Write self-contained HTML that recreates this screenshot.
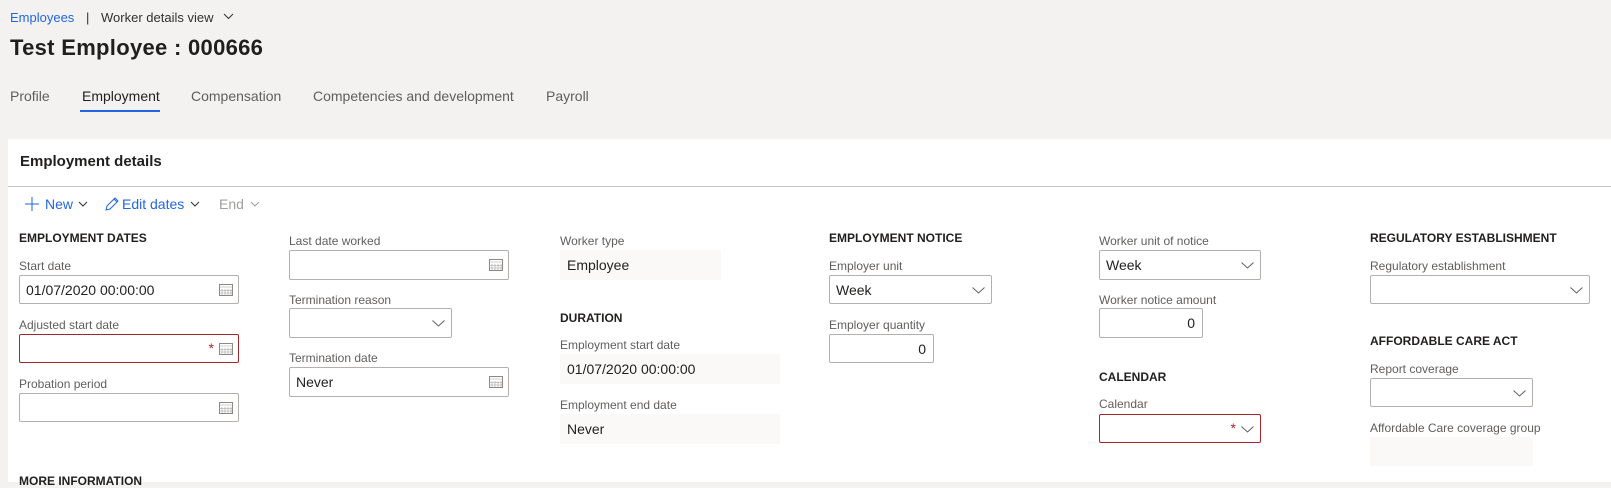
<!DOCTYPE html>
<html><head><meta charset="utf-8"><style>
*{margin:0;padding:0;box-sizing:border-box}
html{background:#f3f2f1}
body{width:1611px;height:482px;overflow:hidden;background:#f3f2f1;font-family:"Liberation Sans",sans-serif;color:#323130;position:relative}
.a{position:absolute;white-space:nowrap}
.lbl{font-size:12px;color:#605e5c;line-height:14px}
.hd{font-size:12px;font-weight:bold;color:#201f1e;line-height:14px}
.in{position:absolute;border:1px solid #b3b0ad;border-radius:2px;background:#fff;font-size:14px;color:#201f1e;padding-left:6px;display:flex;align-items:center}
.ro{position:absolute;background:#faf9f8;font-size:14px;color:#201f1e;padding-left:7px;display:flex;align-items:center}
.red{border-color:#a4262c}
.ic{position:absolute;right:5px;top:8px}
.r{justify-content:flex-end;padding-right:7px}
</style></head><body>
<div class="a" style="left:10px;top:10px;font-size:13px;color:#2266e3">Employees</div>
<div class="a" style="left:86px;top:10px;font-size:13px;color:#323130">|</div>
<div class="a" style="left:101px;top:10px;font-size:13px;color:#323130">Worker details view</div>
<svg class="a" style="left:223px;top:13px" width="11" height="7"><polyline points="1,1 5.5,5.5 10,1" fill="none" stroke="#323130" stroke-width="1"/></svg>
<div class="a" style="left:10px;top:35px;font-size:22px;font-weight:bold;color:#201f1e;letter-spacing:0.3px">Test Employee : 000666</div>
<div class="a" style="left:10px;top:88px;font-size:14px;color:#605e5c">Profile</div>
<div class="a" style="left:82px;top:88px;font-size:14px;color:#201f1e">Employment</div>
<div class="a" style="left:80px;top:110px;width:80px;height:2px;background:#2266e3"></div>
<div class="a" style="left:191px;top:88px;font-size:14px;color:#605e5c">Compensation</div>
<div class="a" style="left:313px;top:88px;font-size:14px;color:#605e5c">Competencies and development</div>
<div class="a" style="left:546px;top:88px;font-size:14px;color:#605e5c">Payroll</div>

<div class="a" style="left:8px;top:139px;width:1603px;height:343px;background:#fff"></div>
<div class="a" style="left:20px;top:153px;font-size:15px;font-weight:bold;color:#201f1e">Employment details</div>
<div class="a" style="left:8px;top:186px;width:1603px;height:1px;background:#c8c6c4"></div>

<svg class="a" style="left:25px;top:197px" width="14" height="14"><path d="M7 0V14M0 7H14" stroke="#2266e3" stroke-width="1"/></svg>
<div class="a" style="left:45px;top:196px;font-size:14px;color:#2266e3">New</div>
<svg class="a" style="left:78px;top:201px" width="10" height="6"><polyline points="1,1 5,5 9,1" fill="none" stroke="#323130"/></svg>
<svg class="a" style="left:105px;top:197px" width="14" height="14"><path d="M1 13L2 9L10 1L13 4L5 12Z M9 2L12 5" fill="none" stroke="#2266e3" stroke-width="1"/></svg>
<div class="a" style="left:122px;top:196px;font-size:14px;color:#2266e3">Edit dates</div>
<svg class="a" style="left:190px;top:201px" width="10" height="6"><polyline points="1,1 5,5 9,1" fill="none" stroke="#323130"/></svg>
<div class="a" style="left:219px;top:196px;font-size:14px;color:#a19f9d">End</div>
<svg class="a" style="left:250px;top:201px" width="10" height="6"><polyline points="1,1 5,5 9,1" fill="none" stroke="#a19f9d"/></svg>

<!-- col1 -->
<div class="a hd" style="left:19px;top:231px">EMPLOYMENT DATES</div>
<div class="a lbl" style="left:19px;top:259px">Start date</div>
<div class="in" style="left:19px;top:275px;width:220px;height:29px">01/07/2020 00:00:00<svg class="ic" width="14" height="12"><rect x="0.5" y="0.5" width="13" height="11" fill="none" stroke="#8a8886"/><path d="M0 3H14M3 5v6M6 5v6M9 5v6M12 5v6M0 6.5H14M0 9H14" stroke="#a19f9d" stroke-width="0.6"/></svg></div>
<div class="a lbl" style="left:19px;top:318px">Adjusted start date</div>
<div class="in red" style="left:19px;top:334px;width:220px;height:29px"><span style="position:absolute;right:24px;top:5px;color:#a4262c;font-size:14px">*</span><svg class="ic" width="14" height="12"><rect x="0.5" y="0.5" width="13" height="11" fill="none" stroke="#8a8886"/><path d="M0 3H14M3 5v6M6 5v6M9 5v6M12 5v6M0 6.5H14M0 9H14" stroke="#a19f9d" stroke-width="0.6"/></svg></div>
<div class="a lbl" style="left:19px;top:377px">Probation period</div>
<div class="in" style="left:19px;top:393px;width:220px;height:29px"><svg class="ic" width="14" height="12"><rect x="0.5" y="0.5" width="13" height="11" fill="none" stroke="#8a8886"/><path d="M0 3H14M3 5v6M6 5v6M9 5v6M12 5v6M0 6.5H14M0 9H14" stroke="#a19f9d" stroke-width="0.6"/></svg></div>
<div class="a hd" style="left:19px;top:474px">MORE INFORMATION</div>

<!-- col2 -->
<div class="a lbl" style="left:289px;top:234px">Last date worked</div>
<div class="in" style="left:289px;top:250px;width:220px;height:30px"><svg class="ic" width="14" height="12"><rect x="0.5" y="0.5" width="13" height="11" fill="none" stroke="#8a8886"/><path d="M0 3H14M3 5v6M6 5v6M9 5v6M12 5v6M0 6.5H14M0 9H14" stroke="#a19f9d" stroke-width="0.6"/></svg></div>
<div class="a lbl" style="left:289px;top:293px">Termination reason</div>
<div class="in" style="left:289px;top:308px;width:163px;height:30px"><svg class="ic" style="top:11px;right:6px" width="13" height="7"><polyline points="0.5,0.5 6.5,6 12.5,0.5" fill="none" stroke="#605e5c"/></svg></div>
<div class="a lbl" style="left:289px;top:351px">Termination date</div>
<div class="in" style="left:289px;top:367px;width:220px;height:30px">Never<svg class="ic" width="14" height="12"><rect x="0.5" y="0.5" width="13" height="11" fill="none" stroke="#8a8886"/><path d="M0 3H14M3 5v6M6 5v6M9 5v6M12 5v6M0 6.5H14M0 9H14" stroke="#a19f9d" stroke-width="0.6"/></svg></div>

<!-- col3 -->
<div class="a lbl" style="left:560px;top:234px">Worker type</div>
<div class="ro" style="left:560px;top:250px;width:161px;height:30px">Employee</div>
<div class="a hd" style="left:560px;top:311px">DURATION</div>
<div class="a lbl" style="left:560px;top:338px">Employment start date</div>
<div class="ro" style="left:560px;top:354px;width:220px;height:30px">01/07/2020 00:00:00</div>
<div class="a lbl" style="left:560px;top:398px">Employment end date</div>
<div class="ro" style="left:560px;top:414px;width:220px;height:30px">Never</div>

<!-- col4 -->
<div class="a hd" style="left:829px;top:231px">EMPLOYMENT NOTICE</div>
<div class="a lbl" style="left:829px;top:259px">Employer unit</div>
<div class="in" style="left:829px;top:275px;width:163px;height:29px">Week<svg class="ic" style="top:11px;right:6px" width="13" height="7"><polyline points="0.5,0.5 6.5,6 12.5,0.5" fill="none" stroke="#605e5c"/></svg></div>
<div class="a lbl" style="left:829px;top:318px">Employer quantity</div>
<div class="in r" style="left:829px;top:334px;width:105px;height:29px">0</div>

<!-- col5 -->
<div class="a lbl" style="left:1099px;top:234px">Worker unit of notice</div>
<div class="in" style="left:1099px;top:250px;width:162px;height:30px">Week<svg class="ic" style="top:11px;right:6px" width="13" height="7"><polyline points="0.5,0.5 6.5,6 12.5,0.5" fill="none" stroke="#605e5c"/></svg></div>
<div class="a lbl" style="left:1099px;top:293px">Worker notice amount</div>
<div class="in r" style="left:1099px;top:308px;width:104px;height:30px">0</div>
<div class="a hd" style="left:1099px;top:370px">CALENDAR</div>
<div class="a lbl" style="left:1099px;top:397px">Calendar</div>
<div class="in red" style="left:1099px;top:414px;width:162px;height:29px"><span style="position:absolute;right:24px;top:5px;color:#a4262c;font-size:14px">*</span><svg class="ic" style="top:11px;right:6px" width="13" height="7"><polyline points="0.5,0.5 6.5,6 12.5,0.5" fill="none" stroke="#605e5c"/></svg></div>

<!-- col6 -->
<div class="a hd" style="left:1370px;top:231px">REGULATORY ESTABLISHMENT</div>
<div class="a lbl" style="left:1370px;top:259px">Regulatory establishment</div>
<div class="in" style="left:1370px;top:275px;width:220px;height:29px"><svg class="ic" style="top:11px;right:6px" width="13" height="7"><polyline points="0.5,0.5 6.5,6 12.5,0.5" fill="none" stroke="#605e5c"/></svg></div>
<div class="a hd" style="left:1370px;top:334px">AFFORDABLE CARE ACT</div>
<div class="a lbl" style="left:1370px;top:362px">Report coverage</div>
<div class="in" style="left:1370px;top:378px;width:163px;height:29px"><svg class="ic" style="top:11px;right:6px" width="13" height="7"><polyline points="0.5,0.5 6.5,6 12.5,0.5" fill="none" stroke="#605e5c"/></svg></div>
<div class="a lbl" style="left:1370px;top:421px">Affordable Care coverage group</div>
<div class="ro" style="left:1370px;top:437px;width:163px;height:29px"></div>
</body></html>
